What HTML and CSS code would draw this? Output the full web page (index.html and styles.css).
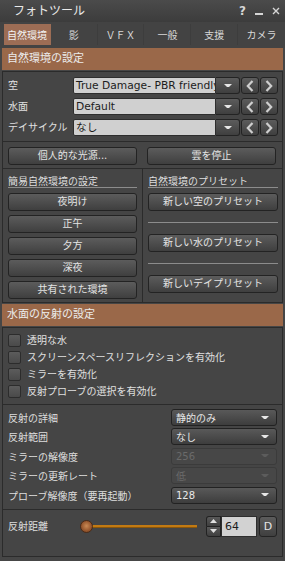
FILE: index.html
```html
<!DOCTYPE html>
<html lang="ja">
<head>
<meta charset="utf-8">
<title>フォトツール</title>
<link rel="stylesheet" href="styles.css">
</head>
<body>
<div class="window">
  <div class="titlebar">
    <span class="title">フォトツール</span>
    <div class="tb-icons">
      <span class="tb-q">?</span>
      <span class="tb-min"></span>
      <svg class="tb-close" width="8" height="8" viewBox="0 0 8 8"><path d="M1 1L7 7M7 1L1 7" stroke="#d6d6d6" stroke-width="1.4"/></svg>
    </div>
  </div>
  <div class="tabs">
    <div class="tab active">自然環境</div>
    <div class="tab">影</div>
    <div class="tab">ＶＦＸ</div>
    <div class="tab">一般</div>
    <div class="tab">支援</div>
    <div class="tab">カメラ</div>
  </div>

  <div class="section-head">自然環境の設定</div>
  <div class="panel">
    <div class="rows">
      <div class="combo-row">
        <span class="label">空</span>
        <div class="field">True Damage- PBR friendly</div>
        <div class="btn drop"><svg width="8" height="4" viewBox="0 0 8 4"><polygon points="0,0 8,0 5,3 3,3" fill="#e6e6e6"/></svg></div>
        <div class="btn nav"><svg width="8" height="12" viewBox="0 0 8 12"><polyline points="6.5,1 1.8,6 6.5,11" fill="none" stroke="#cfcfcf" stroke-width="2.2"/></svg></div>
        <div class="btn nav"><svg width="8" height="12" viewBox="0 0 8 12"><polyline points="1.5,1 6.2,6 1.5,11" fill="none" stroke="#cfcfcf" stroke-width="2.2"/></svg></div>
      </div>
      <div class="combo-row">
        <span class="label">水面</span>
        <div class="field">Default</div>
        <div class="btn drop"><svg width="8" height="4" viewBox="0 0 8 4"><polygon points="0,0 8,0 5,3 3,3" fill="#e6e6e6"/></svg></div>
        <div class="btn nav"><svg width="8" height="12" viewBox="0 0 8 12"><polyline points="6.5,1 1.8,6 6.5,11" fill="none" stroke="#cfcfcf" stroke-width="2.2"/></svg></div>
        <div class="btn nav"><svg width="8" height="12" viewBox="0 0 8 12"><polyline points="1.5,1 6.2,6 1.5,11" fill="none" stroke="#cfcfcf" stroke-width="2.2"/></svg></div>
      </div>
      <div class="combo-row">
        <span class="label">デイサイクル</span>
        <div class="field">なし</div>
        <div class="btn drop"><svg width="8" height="4" viewBox="0 0 8 4"><polygon points="0,0 8,0 5,3 3,3" fill="#e6e6e6"/></svg></div>
        <div class="btn nav"><svg width="8" height="12" viewBox="0 0 8 12"><polyline points="6.5,1 1.8,6 6.5,11" fill="none" stroke="#cfcfcf" stroke-width="2.2"/></svg></div>
        <div class="btn nav"><svg width="8" height="12" viewBox="0 0 8 12"><polyline points="1.5,1 6.2,6 1.5,11" fill="none" stroke="#cfcfcf" stroke-width="2.2"/></svg></div>
      </div>
    </div>
    <div class="btnrow">
      <div class="btn wide">個人的な光源...</div>
      <div class="btn wide">雲を停止</div>
    </div>
    <div class="cols">
      <div class="col col-left">
        <div class="col-head">簡易自然環境の設定</div>
        <div class="btn-stack">
          <div class="btn wide">夜明け</div>
          <div class="btn wide">正午</div>
          <div class="btn wide">夕方</div>
          <div class="btn wide">深夜</div>
          <div class="btn wide">共有された環境</div>
        </div>
      </div>
      <div class="col col-right">
        <div class="col-head">自然環境のプリセット</div>
        <div class="preset-stack">
          <div class="btn wide">新しい空のプリセット</div>
          <div class="rule"></div>
          <div class="btn wide">新しい水のプリセット</div>
          <div class="rule"></div>
          <div class="btn wide">新しいデイプリセット</div>
        </div>
      </div>
    </div>
  </div>

  <div class="section-head">水面の反射の設定</div>
  <div class="panel panel-last">
    <div class="checks">
      <div class="check-row"><span class="box"></span><span>透明な水</span></div>
      <div class="check-row"><span class="box"></span><span>スクリーンスペースリフレクションを有効化</span></div>
      <div class="check-row"><span class="box"></span><span>ミラーを有効化</span></div>
      <div class="check-row"><span class="box"></span><span>反射プローブの選択を有効化</span></div>
    </div>
    <div class="drops">
      <div class="drop-row"><span class="dlabel">反射の詳細</span><div class="dd"><span>静的のみ</span><svg width="8" height="4" viewBox="0 0 8 4"><polygon points="0,0 8,0 5,3 3,3" fill="#e6e6e6"/></svg></div></div>
      <div class="drop-row"><span class="dlabel">反射範囲</span><div class="dd"><span>なし</span><svg width="8" height="4" viewBox="0 0 8 4"><polygon points="0,0 8,0 5,3 3,3" fill="#e6e6e6"/></svg></div></div>
      <div class="drop-row"><span class="dlabel">ミラーの解像度</span><div class="dd disabled"><span>256</span><svg width="8" height="4" viewBox="0 0 8 4"><polygon points="0,0 8,0 5,3 3,3" fill="#5c5c5c"/></svg></div></div>
      <div class="drop-row"><span class="dlabel">ミラーの更新レート</span><div class="dd disabled"><span>低</span><svg width="8" height="4" viewBox="0 0 8 4"><polygon points="0,0 8,0 5,3 3,3" fill="#5c5c5c"/></svg></div></div>
      <div class="drop-row"><span class="dlabel">プローブ解像度（要再起動）</span><div class="dd"><span>128</span><svg width="8" height="4" viewBox="0 0 8 4"><polygon points="0,0 8,0 5,3 3,3" fill="#e6e6e6"/></svg></div></div>
    </div>
    <div class="slider-sec">
      <span class="slabel">反射距離</span>
      <div class="slider">
        <div class="track"></div>
        <div class="knob"></div>
      </div>
      <div class="spinner">
        <div class="spin up"><svg width="7" height="4" viewBox="0 0 7 4"><polygon points="3.5,0 7,4 0,4" fill="#e0e0e0"/></svg></div>
        <div class="spin down"><svg width="7" height="4" viewBox="0 0 7 4"><polygon points="0,0 7,0 3.5,4" fill="#e0e0e0"/></svg></div>
      </div>
      <div class="numfield">64</div>
      <div class="btn dbtn">D</div>
    </div>
  </div>
</div>
</body>
</html>
```

FILE: styles.css
```css
* { box-sizing: border-box; }
html, body { margin: 0; padding: 0; }
body {
  width: 285px;
  height: 561px;
  overflow: hidden;
  background: #464646;
  font-family: "DejaVu Sans", "Noto Sans CJK JP", sans-serif;
  font-size: 10px;
  color: #e0e0e0;
}
.window { display: flex; flex-direction: column; height: 561px; }

/* title bar */
.titlebar {
  height: 22px;
  display: flex;
  align-items: center;
  padding: 0 5px 0 13px;
  background: linear-gradient(#4b4b4b, #3c3c3c);
}
.title { flex: 1; font-size: 12px; line-height: 14px; color: #eaeaea; }
.tb-icons { display: flex; align-items: center; gap: 9px; }
.tb-q { font-weight: bold; font-size: 12px; color: #d6d6d6; line-height: 12px; }
.tb-min { width: 8px; height: 2px; background: #d6d6d6; margin-top: 5px; }
.tb-close { display: block; }

/* tabs */
.tabs {
  height: 26px;
  display: flex;
  padding: 2px 0 0 4px;
  background: #434343;
}
.tab {
  width: 47px;
  height: 21px;
  display: flex;
  align-items: center;
  justify-content: center;
  font-size: 10px;
  color: #d8d8d8;
  border-right: 1px solid #3d3d3d;
}
.tab.active { background: #9d6d55; color: #f2f2f2; border-right-color: #9d6d55; }
.tab:last-child { border-right: none; }

/* section header */
.section-head {
  height: 22px;
  margin: 0 2px;
  padding-left: 5px;
  background: #9a6849;
  font-size: 11px;
  line-height: 22px;
  color: #ececec;
}

.panel {
  margin: 1px 2px 1px;
  border: 1px solid #2b2b2b;
  background: #454545;
}
.panel-last { flex: 1; margin-bottom: 4px; }

/* combo rows */
.rows { padding: 5px 4px 5px 5px; display: flex; flex-direction: column; gap: 4px; }
.combo-row { display: flex; height: 17px; align-items: stretch; }
.label { width: 65px; line-height: 17px; color: #e0e0e0; }
.field {
  width: 143px;
  background: #d0d0d0;
  border: 1px solid #2e2e2e;
  border-radius: 2px 0 0 2px;
  padding-left: 2px;
  color: #1c1c1c;
  font-size: 10.7px;
  line-height: 15px;
  white-space: nowrap;
  overflow: hidden;
}
.btn {
  display: flex;
  align-items: center;
  justify-content: center;
  background: linear-gradient(#5c5c5c, #3f3f3f);
  border: 1px solid #232323;
  border-radius: 3px;
  color: #e4e4e4;
}
.btn.drop { width: 24px; border-radius: 0 3px 3px 0; border-left: none; }
.btn.nav { width: 18px; margin-left: 1px; }

/* buttons row */
.btnrow {
  border-top: 1px solid #2b2b2b;
  padding: 5px 5px 3px 5px;
  display: flex;
  gap: 10px;
}
.btn.wide { flex: 1; height: 18px; font-size: 10px; line-height: 16px; }
.btnrow .btn.wide { flex: none; width: 129px; }

/* columns */
.cols { border-top: 1px solid #2b2b2b; display: flex; }
.col { display: flex; flex-direction: column; }
.col-left { width: 140px; border-right: 1px solid #2b2b2b; padding: 0 5px 3px 5px; }
.col-right { flex: 1; padding: 0 4px 3px 5px; }
.col-head {
  padding-top: 7px;
  line-height: 11px;
  height: 19px;
  border-bottom: 1px solid #8c8c8c;
  color: #dedede;
}
.btn-stack { display: flex; flex-direction: column; gap: 4px; margin-top: 5px; }
.preset-stack { display: flex; flex-direction: column; gap: 11px; margin-top: 5px; }
.rule { height: 1px; background: #8c8c8c; }

/* checkboxes */
.checks { padding: 6px 5px 6px 5px; display: flex; flex-direction: column; gap: 4px; }
.check-row { display: flex; align-items: center; gap: 6px; height: 13px; line-height: 13px; }
.box {
  width: 13px;
  height: 13px;
  border: 1px solid #2c2c2c;
  border-radius: 2px;
  background: linear-gradient(#5c5c5c, #4a4a4a);
}

/* dropdowns */
.drops {
  border-top: 1px solid #2b2b2b;
  padding: 4px 5px 5px 5px;
  display: flex;
  flex-direction: column;
  gap: 2.4px;
}
.drop-row { display: flex; align-items: center; height: 17px; }
.dlabel { width: 163px; color: #dedede; }
.dd {
  width: 106px;
  height: 17px;
  display: flex;
  align-items: center;
  justify-content: space-between;
  padding: 0 7px 0 4px;
  background: linear-gradient(#595959, #3d3d3d);
  border: 1px solid #222222;
  border-radius: 3px;
  color: #e8e8e8;
}
.dd.disabled { background: #474747; border-color: #3b3b3b; color: #6a6a6a; }

/* slider */
.slider-sec {
  border-top: 1px solid #2b2b2b;
  padding: 6px 5px 0 5px;
  display: flex;
  align-items: flex-start;
  height: 47px;
}
.slabel { width: 72px; line-height: 21px; color: #dedede; }
.slider { position: relative; width: 118px; height: 21px; display: flex; align-items: center; }
.track { margin-left: 6px; width: 111px; height: 3px; background: #c27a12; border-bottom: 1px solid #8a560c; }
.knob {
  position: absolute;
  left: 0;
  top: 4px;
  width: 13px;
  height: 13px;
  border-radius: 50%;
  border: 1px solid #4a2a16;
  background: radial-gradient(circle at 50% 45%, #c98a55 0%, #9a5a30 55%, #6e3c1e 100%);
}
.spinner { margin-left: 8px; width: 15px; height: 21px; display: flex; flex-direction: column; }
.spin {
  flex: 1;
  display: flex;
  align-items: center;
  justify-content: center;
  background: linear-gradient(#595959, #3f3f3f);
  border: 1px solid #222222;
}
.spin.up { border-radius: 3px 0 0 0; border-bottom: none; }
.spin.down { border-radius: 0 0 0 3px; }
.numfield {
  width: 36px;
  height: 21px;
  background: #d2d2d2;
  border: 1px solid #2e2e2e;
  color: #1c1c1c;
  font-size: 11px;
  line-height: 19px;
  padding-left: 3px;
}
.btn.dbtn { width: 18px; height: 21px; margin-left: 2px; font-size: 11px; }
```
